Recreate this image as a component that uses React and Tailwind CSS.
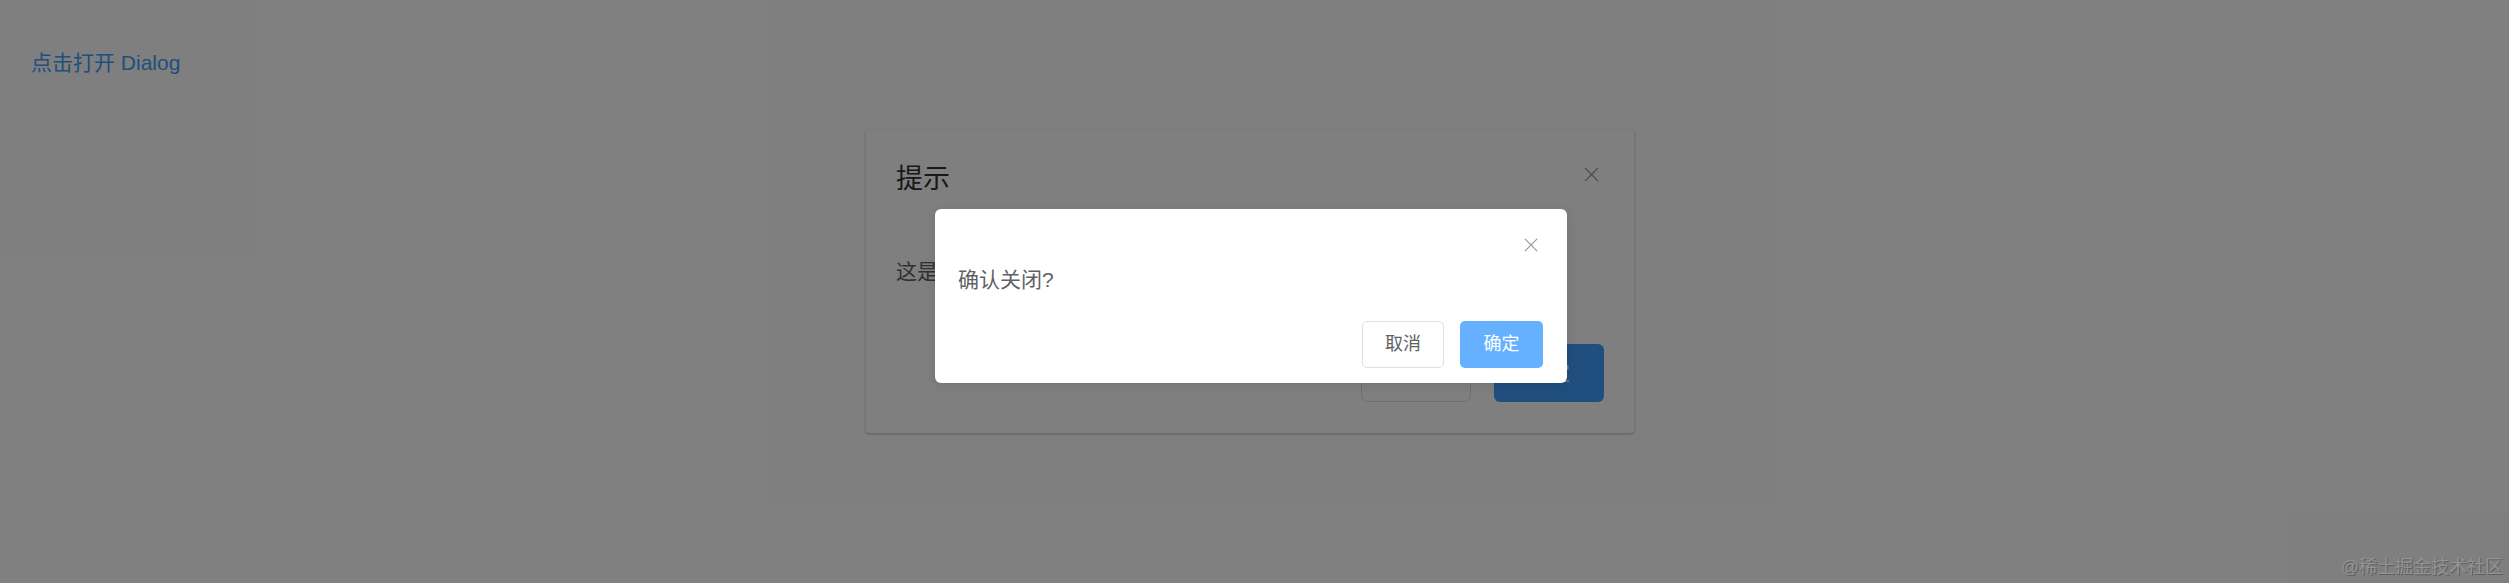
const FONT = "font-['Liberation_Sans','Noto_Sans_CJK_SC',sans-serif]";

function CloseIcon({ className = '' }) {
  return (
    <svg viewBox="0 0 16 16" className={className} fill="none" stroke="currentColor" strokeWidth="1.3">
      <path d="M1 1L15 15M15 1L1 15" />
    </svg>
  );
}

function OuterDialog() {
  return (
    <div className="relative w-[768px] rounded-[3px] bg-white shadow-[0_1px_3px_rgba(0,0,0,0.3)]">
      {/* header */}
      <div className="px-[30px] pt-[31px] pb-[15px]">
        <span className="text-[27px] leading-[36px] text-[#303133]">提示</span>
      </div>
      <button className="absolute top-[37px] right-[35px] text-[#909399]">
        <CloseIcon className="w-[15px] h-[15px]" />
      </button>

      {/* body */}
      <div className="px-[30px] pt-[44px] pb-[41px] text-[21px] leading-[32px] text-[#606266]">
        这是一段信息
      </div>

      {/* footer */}
      <div className="flex justify-end gap-[23px] px-[30px] pt-[15px] pb-[31px]">
        <button className="w-[110px] h-[58px] rounded-[6px] border border-[#dcdfe6] bg-white text-[21px] text-[#606266]">
          取消
        </button>
        <button className="w-[110px] h-[58px] rounded-[6px] bg-[#409eff] text-[21px] text-white">
          确定
        </button>
      </div>
    </div>
  );
}

function MessageBox() {
  return (
    <div className="relative w-[632px] h-[174px] rounded-[6px] bg-white shadow-[0_2px_12px_rgba(0,0,0,0.1)] flex flex-col">
      <button className="absolute top-[29px] right-[29px] text-[#909399]">
        <CloseIcon className="w-[14px] h-[14px]" />
      </button>
      <div className="px-[23px] pt-[53px] text-[21px] leading-[36px] text-[#606266]">确认关闭?</div>
      <div className="mt-auto flex justify-end gap-[16px] pr-[24px] pb-[15px]">
        <button className="w-[82px] h-[47px] rounded-[5px] border border-[#dcdfe6] bg-white text-[18px] text-[#606266]">
          取消
        </button>
        <button className="w-[83px] h-[47px] rounded-[5px] bg-[#66b1ff] text-[18px] text-white">
          确定
        </button>
      </div>
    </div>
  );
}

export default function App() {
  return (
    <div className={`relative h-[583px] w-full overflow-hidden bg-white ${FONT}`}>
      {/* page */}
      <div className="pt-[49px] pl-[31px]">
        <button className="text-[21px] leading-[28px] text-[#409eff]">点击打开 Dialog</button>
      </div>

      {/* first dialog */}
      <div className="absolute inset-0 flex justify-center items-start pt-[130px] pr-[9px]">
        <OuterDialog />
      </div>

      {/* shared modal mask */}
      <div className="absolute inset-0 bg-black/50" />

      {/* message box on top */}
      <div className="absolute inset-0 flex justify-center items-start pt-[209px] pr-[7px]">
        <MessageBox />
      </div>

      {/* watermark */}
      <div className="absolute right-[6px] bottom-[6px] text-[18px] leading-[20px] text-[#939393] [text-shadow:1px_1px_0_#5e5e5e]">
        @稀土掘金技术社区
      </div>
    </div>
  );
}
